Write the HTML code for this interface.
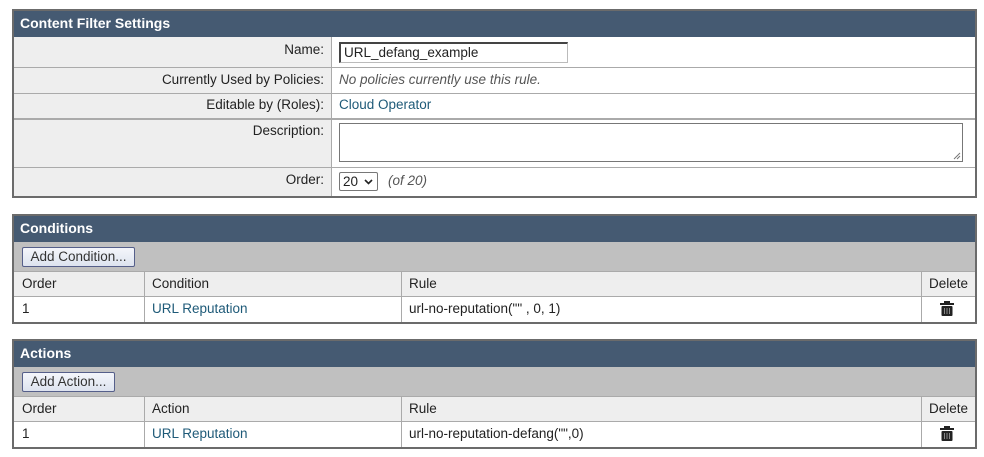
<!DOCTYPE html>
<html><head><style>
body{margin:0;background:#fff;font-family:"Liberation Sans",Arial,sans-serif;font-size:13.5px;color:#222;}
.a{position:absolute;box-sizing:border-box;}
.box{border:2px solid #6b6b6b;}
.hd{background:#455a72;color:#fff;font-weight:bold;font-size:14px;padding-left:6px;line-height:25px;}
.lab{background:#eeeeee;text-align:right;padding-right:7px;}
.ln{background:#aaa;height:1px;}
.lnk{color:#1e5a78;}
.btn{background:linear-gradient(#f4f6fb,#dde3ef);border:1px solid #555f8a;border-radius:2px;color:#333;font-size:13.5px;text-align:center;line-height:18px;}
.th{background:#eeeeee;}
.c{padding-left:7px;line-height:24px;}
</style></head><body>
<div class="a box" style="left:12px;top:9px;width:965px;height:189px;background:#fff"></div>
<div class="a hd" style="left:14px;top:11px;width:961px;height:26px;">Content Filter Settings</div>
<div class="a lab" style="left:14px;top:37px;width:317px;height:159px;"></div>
<div class="a" style="left:331px;top:37px;width:1px;height:159px;background:#aaa"></div>
<div class="a ln" style="left:14px;top:67px;width:961px"></div>
<div class="a ln" style="left:14px;top:93px;width:961px"></div>
<div class="a ln" style="left:14px;top:118px;width:961px;height:2px"></div>
<div class="a ln" style="left:14px;top:167px;width:961px"></div>
<div class="a" style="left:14px;top:42px;width:310px;text-align:right">Name:</div>
<div class="a" style="left:14px;top:72px;width:310px;text-align:right">Currently Used by Policies:</div>
<div class="a" style="left:14px;top:97px;width:310px;text-align:right">Editable by (Roles):</div>
<div class="a" style="left:14px;top:123px;width:310px;text-align:right">Description:</div>
<div class="a" style="left:14px;top:172px;width:310px;text-align:right">Order:</div>
<div class="a" style="left:339px;top:42px;width:229px;height:21px;border:1px solid #bbb;border-top:2px solid #444;border-left:2px solid #444;padding-left:3px;line-height:18px">URL_defang_example</div>
<div class="a" style="left:339px;top:72px;color:#555;font-style:italic">No policies currently use this rule.</div>
<div class="a lnk" style="left:339px;top:97px">Cloud Operator</div>
<div class="a" style="left:339px;top:123px;width:624px;height:39px;border:1px solid #777"></div>
<svg class="a" style="left:953px;top:152px" width="8" height="8"><path d="M1 7L7 1M4 7L7 4" stroke="#777"/></svg>
<div class="a" style="left:339px;top:172px;width:39px;height:19px;border:1px solid #777;border-radius:2px;padding-left:3px;line-height:17px">20</div>
<svg class="a" style="left:364px;top:179px" width="9" height="6"><path d="M1 1L4.5 4.5L8 1" stroke="#222" stroke-width="1.6" fill="none"/></svg>
<div class="a" style="left:388px;top:173px;color:#555;font-style:italic">(of 20)</div>

<div class="a box" style="left:12px;top:214px;width:965px;height:110px;background:#fff"></div>
<div class="a hd" style="left:14px;top:216px;width:961px;height:26px;">Conditions</div>
<div class="a" style="left:14px;top:242px;width:961px;height:29px;background:#c0c0c0"></div>
<div class="a btn" style="left:22px;top:247px;width:113px;height:20px">Add Condition...</div>
<div class="a th" style="left:14px;top:271px;width:961px;height:25px"></div>
<div class="a ln" style="left:14px;top:271px;width:961px"></div>
<div class="a ln" style="left:14px;top:296px;width:961px"></div>
<div class="a" style="left:144px;top:271px;width:1px;height:51px;background:#aaa"></div>
<div class="a" style="left:401px;top:271px;width:1px;height:51px;background:#aaa"></div>
<div class="a" style="left:921px;top:271px;width:1px;height:51px;background:#aaa"></div>
<div class="a c" style="left:15px;top:272px">Order</div>
<div class="a c" style="left:145px;top:272px">Condition</div>
<div class="a c" style="left:402px;top:272px">Rule</div>
<div class="a" style="left:922px;top:272px;width:53px;text-align:center;line-height:24px">Delete</div>
<div class="a c" style="left:15px;top:297px">1</div>
<div class="a c lnk" style="left:145px;top:297px">URL Reputation</div>
<div class="a c" style="left:402px;top:297px">url-no-reputation("" , 0, 1)</div>
<svg class="a" style="left:940px;top:301px" width="14" height="15"><rect x="4" y="0" width="6" height="2" fill="#222"/><rect x="0" y="2" width="14" height="2" fill="#222"/><rect x="1.5" y="5" width="11" height="10" rx="1" fill="#222"/><path d="M4.5 7V13M7 7V13M9.5 7V13" stroke="#888"/></svg>

<div class="a box" style="left:12px;top:339px;width:965px;height:110px;background:#fff"></div>
<div class="a hd" style="left:14px;top:341px;width:961px;height:26px;">Actions</div>
<div class="a" style="left:14px;top:367px;width:961px;height:29px;background:#c0c0c0"></div>
<div class="a btn" style="left:22px;top:372px;width:93px;height:20px">Add Action...</div>
<div class="a th" style="left:14px;top:396px;width:961px;height:25px"></div>
<div class="a ln" style="left:14px;top:396px;width:961px"></div>
<div class="a ln" style="left:14px;top:421px;width:961px"></div>
<div class="a" style="left:144px;top:396px;width:1px;height:51px;background:#aaa"></div>
<div class="a" style="left:401px;top:396px;width:1px;height:51px;background:#aaa"></div>
<div class="a" style="left:921px;top:396px;width:1px;height:51px;background:#aaa"></div>
<div class="a c" style="left:15px;top:397px">Order</div>
<div class="a c" style="left:145px;top:397px">Action</div>
<div class="a c" style="left:402px;top:397px">Rule</div>
<div class="a" style="left:922px;top:397px;width:53px;text-align:center;line-height:24px">Delete</div>
<div class="a c" style="left:15px;top:422px">1</div>
<div class="a c lnk" style="left:145px;top:422px">URL Reputation</div>
<div class="a c" style="left:402px;top:422px">url-no-reputation-defang("",0)</div>
<svg class="a" style="left:940px;top:426px" width="14" height="15"><rect x="4" y="0" width="6" height="2" fill="#222"/><rect x="0" y="2" width="14" height="2" fill="#222"/><rect x="1.5" y="5" width="11" height="10" rx="1" fill="#222"/><path d="M4.5 7V13M7 7V13M9.5 7V13" stroke="#888"/></svg>
</body></html>
